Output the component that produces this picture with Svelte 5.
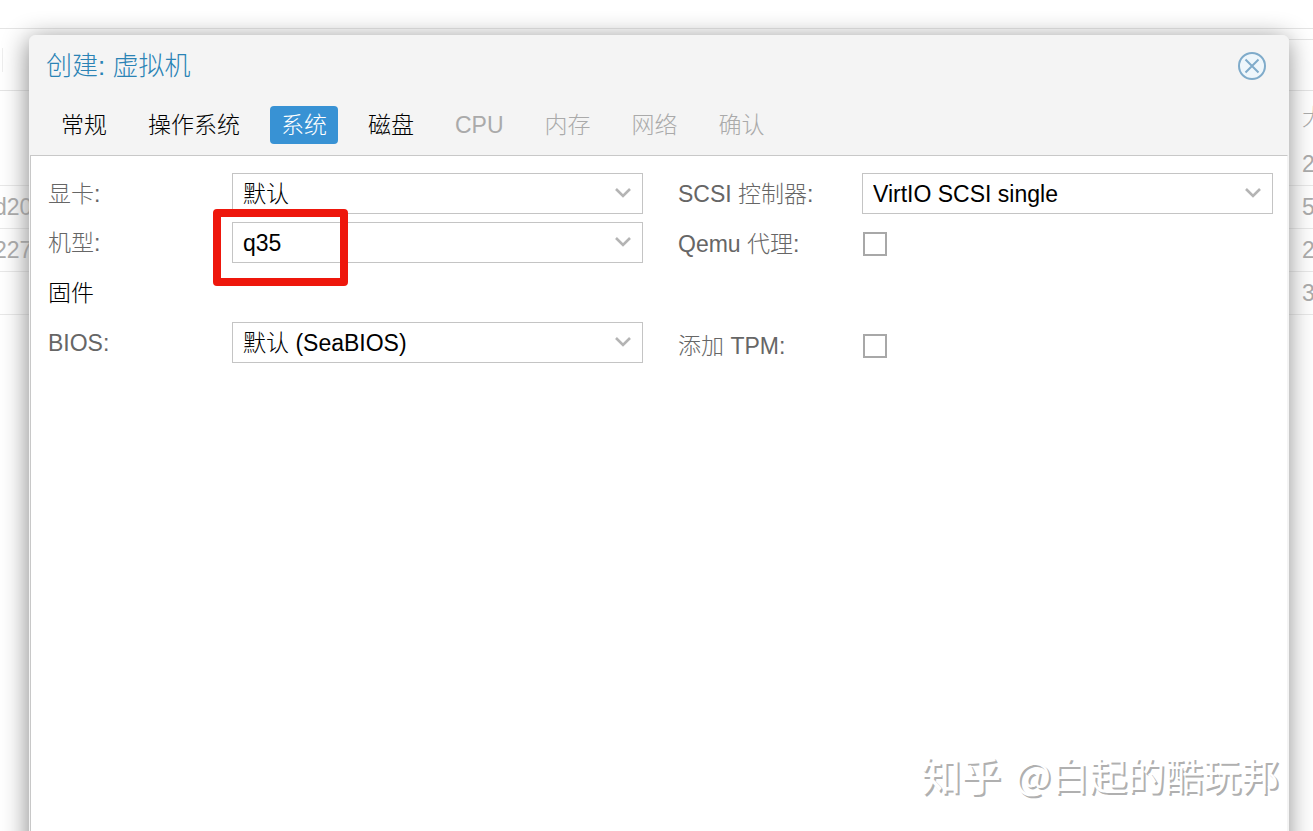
<script>
	const tabs = [
		{ id: 'general', title: '常规' },
		{ id: 'os', title: '操作系统' },
		{ id: 'system', title: '系统' },
		{ id: 'disks', title: '磁盘' },
		{ id: 'cpu', title: 'CPU', disabled: true },
		{ id: 'memory', title: '内存', disabled: true },
		{ id: 'network', title: '网络', disabled: true },
		{ id: 'confirm', title: '确认', disabled: true }
	];

	const rows = [
		{ name: '', size: '2' },
		{ name: 'd20', size: '5' },
		{ name: '227', size: '2' },
		{ name: '', size: '3' }
	];

	let active = $state('system');
	let agent = $state(false);
	let tpm = $state(false);
</script>

{#snippet combo(id, value)}
	<div class="combo">
		<select {id}>
			<option>{value}</option>
		</select>
		<svg class="arrow" viewBox="0 0 16 10" aria-hidden="true">
			<path d="M1 1 8 8 15 1" />
		</svg>
	</div>
{/snippet}

<div class="viewport">
	<div class="backdrop">
		<div class="topbar"></div>
		<div class="toolbar"><span class="separator"></span><span class="panel-edge"></span></div>
		<table class="storage">
			<thead>
				<tr><th></th><th></th><th class="size">大</th></tr>
			</thead>
			<tbody>
				{#each rows as row}
					<tr>
						<td class="name">{row.name}</td>
						<td></td>
						<td class="size">{row.size}</td>
					</tr>
				{/each}
			</tbody>
		</table>
	</div>

	<div class="window" role="dialog" aria-labelledby="window-title">
		<header>
			<div class="title">
				<h1 id="window-title">创建: 虚拟机</h1>
				<button class="close" aria-label="关闭">
					<svg viewBox="0 0 28 28" aria-hidden="true">
						<circle cx="14" cy="14" r="13" />
						<path d="M7.5 7.5 20.5 20.5M20.5 7.5 7.5 20.5" />
					</svg>
				</button>
			</div>
			<nav>
				{#each tabs as tab (tab.id)}
					<button
						class="tab"
						class:active={active === tab.id}
						disabled={tab.disabled}
						onclick={() => (active = tab.id)}>{tab.title}</button
					>
				{/each}
			</nav>
		</header>

		<form>
			<div class="column">
				<div class="row">
					<label for="vga">显卡:</label>
					{@render combo('vga', '默认')}
				</div>
				<div class="row">
					<label for="machine">机型:</label>
					<div class="marked">
						{@render combo('machine', 'q35')}
						<span class="marker"></span>
					</div>
				</div>
				<div class="row plain">固件</div>
				<div class="row">
					<label for="bios">BIOS:</label>
					{@render combo('bios', '默认 (SeaBIOS)')}
				</div>
			</div>
			<div class="column">
				<div class="row">
					<label for="scsihw">SCSI 控制器:</label>
					{@render combo('scsihw', 'VirtIO SCSI single')}
				</div>
				<div class="row plain">
					<label for="agent">Qemu 代理:</label>
					<input id="agent" type="checkbox" bind:checked={agent} />
				</div>
				<div class="row plain"></div>
				<div class="row plain">
					<label for="tpm">添加 TPM:</label>
					<input id="tpm" type="checkbox" bind:checked={tpm} />
				</div>
			</div>
		</form>
	</div>

	<div class="watermark"><span class="site">知乎</span><span>@白起的酷玩邦</span></div>
</div>

<style>
	:global(body) {
		margin: 0;
		background: #fff;
	}

	.viewport {
		position: relative;
		height: 100vh;
		overflow: hidden;
		font-family: "Liberation Sans", "Noto Sans CJK SC", sans-serif;
		font-size: 23px;
		font-weight: 300;
		line-height: 34px;
		color: #000;
	}

	button,
	select {
		font: inherit;
		color: inherit;
	}

	/* page behind the window */
	.topbar {
		height: 28px;
		border-bottom: 1px solid #e4e4e4;
	}

	.toolbar {
		display: flex;
		justify-content: space-between;
		height: 61px;
		border-bottom: 1px solid #e4e4e4;
	}

	.separator {
		width: 2px;
		height: 24px;
		margin-top: 19px;
		border-right: 1px solid #eee;
	}

	.panel-edge {
		width: 24px;
		margin-top: 10px;
		border-top: 1px solid #e4e4e4;
	}

	.storage {
		width: 100%;
		table-layout: fixed;
		border-collapse: collapse;
		color: #aaa;
	}

	.storage th,
	.storage td {
		height: 42px;
		padding: 0;
		border-bottom: 1px solid #e8e8e8;
		font-weight: 300;
		text-align: left;
		white-space: nowrap;
		overflow: hidden;
	}

	.storage th {
		height: 52px;
		border-bottom: none;
		color: #aaa;
	}

	.storage th:first-child {
		width: 40px;
	}

	.storage th.size {
		width: 11px;
	}

	.storage .name {
		text-indent: -6px;
	}

	/* window */
	.window {
		position: absolute;
		top: 35px;
		right: 24px;
		bottom: -40px;
		left: 29px;
		display: flex;
		flex-direction: column;
		box-sizing: border-box;
		border: 1px solid #f4f4f4;
		border-radius: 6px 6px 0 0;
		background: #f4f4f4;
		box-shadow: -1px 4px 26px #888;
	}

	header {
		height: 119px;
	}

	.title {
		display: flex;
		align-items: center;
		justify-content: space-between;
		height: 60px;
		padding: 0 21px 0 16px;
	}

	h1 {
		margin: 0;
		font-size: 26px;
		font-weight: 300;
		color: #2a83b5;
	}

	.close {
		width: 30px;
		height: 30px;
		padding: 1px;
		border: none;
		background: none;
	}

	.close svg {
		display: block;
		fill: #eef6fb;
		stroke: #7fabca;
		stroke-width: 2;
	}

	nav {
		display: flex;
		gap: 19px;
		padding: 10px 20px;
	}

	.tab {
		height: 38px;
		padding: 0 11px;
		border: none;
		border-radius: 4px;
		background: none;
	}

	.tab:disabled {
		color: #aaa;
	}

	.tab.active {
		background: #3892d4;
		color: #fff;
	}

	form {
		flex: 1;
		display: grid;
		grid-template-columns: 1fr 1fr;
		column-gap: 35px;
		align-items: start;
		padding: 17px 14px 17px 17px;
		border: 1px solid #c8c8c8;
		border-right-color: #f4f4f4;
		background: #fff;
	}

	.column {
		display: grid;
		gap: 8px;
	}

	.row {
		display: grid;
		grid-template-columns: 184px 1fr;
		align-items: center;
		height: 41px;
	}

	.row.plain {
		height: 43px;
	}

	label {
		color: #666;
	}

	.combo,
	.marked {
		position: relative;
	}

	select {
		display: block;
		width: 100%;
		height: 41px;
		padding: 0 40px 0 10px;
		border: 1px solid #c4c4c4;
		border-radius: 0;
		background: #fff;
		appearance: none;
	}

	.arrow {
		position: absolute;
		top: 15px;
		right: 12px;
		width: 16px;
		height: 10px;
		fill: none;
		stroke: #b4b4b4;
		stroke-width: 2.6;
		pointer-events: none;
	}

	.marker {
		position: absolute;
		top: -13px;
		left: -19px;
		box-sizing: border-box;
		width: 135px;
		height: 77px;
		border: 8px solid #ee170c;
		border-radius: 4px;
		pointer-events: none;
	}

	input {
		width: 24px;
		height: 24px;
		margin: 0 0 0 1px;
		border: 2px solid #a8a8a8;
		background: #fff;
		appearance: none;
	}

	input:checked {
		background: #3892d4;
	}

	.watermark {
		position: absolute;
		right: 34px;
		bottom: 30px;
		display: flex;
		align-items: center;
		gap: 14px;
		font-family: "Noto Sans CJK SC", sans-serif;
		font-size: 38px;
		font-weight: 400;
		line-height: 54px;
		color: #fff;
		text-shadow: 2px 2px 0 #b0b0b0;
		pointer-events: none;
	}

	.site {
		font-size: 40px;
		font-weight: 500;
	}
</style>
